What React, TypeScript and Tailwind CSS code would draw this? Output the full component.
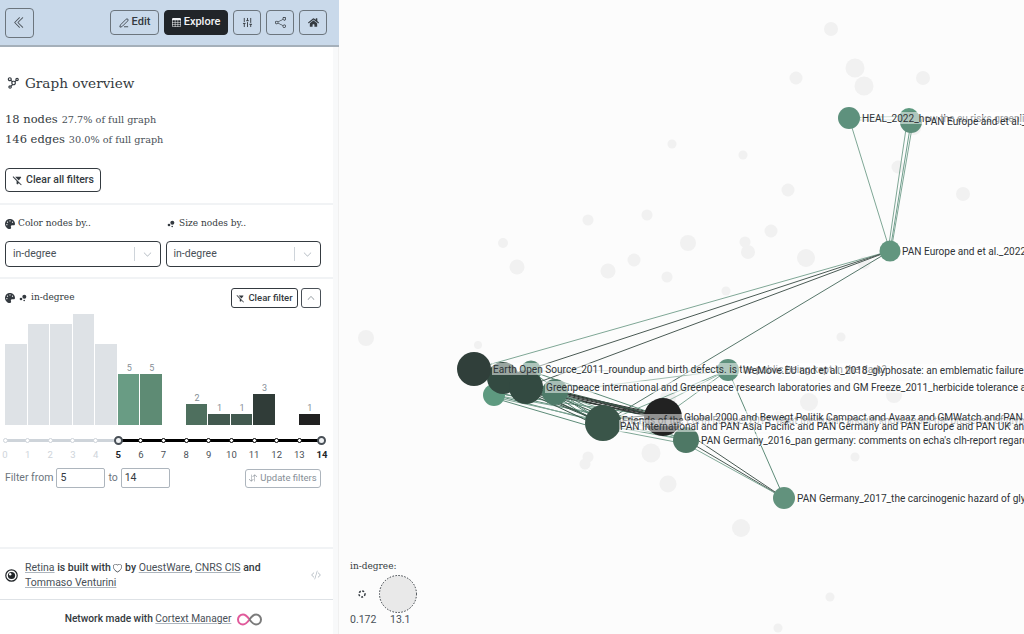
import React from 'react';
import { BsChevronDoubleLeft, BsShare, BsChevronDown, BsChevronUp, BsHeart, BsCodeSlash, BsArrowDownUp, BsTable } from 'react-icons/bs';
import { FaHome, FaPalette } from 'react-icons/fa';
import { BiNetworkChart } from 'react-icons/bi';
import { MdBubbleChart, MdFilterAltOff } from 'react-icons/md';
import { SlidersVertical, PenLine } from 'lucide-react';

const sans = "font-['Roboto','Liberation_Sans',sans-serif]";
const serif = "font-['DejaVu_Serif','Liberation_Serif',serif]";

const BARS: { h: number; color: string; label?: number }[] = [
  { h: 81, color: '#dee2e6' },
  { h: 101, color: '#dee2e6' },
  { h: 101, color: '#dee2e6' },
  { h: 111, color: '#dee2e6' },
  { h: 81, color: '#dee2e6' },
  { h: 51, color: '#699c84', label: 5 },
  { h: 51, color: '#5e8b74', label: 5 },
  { h: 0, color: 'transparent' },
  { h: 21, color: '#4e6f5e', label: 2 },
  { h: 11, color: '#42594f', label: 1 },
  { h: 11, color: '#42594f', label: 1 },
  { h: 31, color: '#303c38', label: 3 },
  { h: 0, color: 'transparent' },
  { h: 11, color: '#212121', label: 1 },
];

const TICKS = [0, 1, 2, 3, 4, 5, 6, 7, 8, 9, 10, 11, 12, 13, 14];

const GRAY_DOTS = [
  [672, 144, 4.5], [588, 220, 5.5], [647, 215, 5.5], [503, 243, 5], [517, 267, 7.5], [608, 271, 7.5],
  [634, 260, 6.5], [667, 277, 5.5], [688, 243, 8], [366, 338, 8], [831, 29, 7], [855, 68, 9.5],
  [864, 86, 9.5], [796, 78, 6.5], [923, 78, 7], [743, 155, 4.5], [788, 190, 6.5], [898, 167, 6.5],
  [963, 194, 7], [771, 231, 6.5], [745, 242, 5.5], [748, 252, 7], [806, 258, 9], [864, 263, 6.5],
  [726, 291, 4.5], [841, 337, 4.5], [914, 128, 7], [588, 457, 5.5], [585, 464, 5.5], [651, 453, 9.5],
  [668, 484, 8.5], [741, 528, 9], [855, 457, 4.5], [830, 597, 4.5], [778, 628, 4.5], [478, 345, 4],
  [668, 398, 8], [809, 402, 9], [894, 395, 8], [778, 418, 7],
];

const NODES = [
  [784, 498, 11, '#62927d'], [890, 251, 10.5, '#62967f'], [849, 118, 11, '#5e917d'], [909, 118, 10, '#5e9a80'],
  [911, 122, 11, '#5e8f7b'], [728, 370, 11, '#5e917d'], [531, 371, 10.5, '#5a8a77'], [555, 392, 13, '#4f7b69'],
  [494, 395, 11, '#5e9a80'], [503, 378, 16, '#334a41'], [474, 369, 17, '#303f3a'], [526, 387, 17, '#334a41'],
  [686, 440, 13, '#4e7865'], [603, 423, 18, '#3a5549'], [663, 417, 19, '#222222'],
] as const;

const EDGES: [number, number, number, number, string][] = [
  [474, 369, 890, 251, '#7fa796'], [503, 378, 890, 251, '#4a5a54'], [526, 387, 890, 251, '#4a5a54'], [603, 423, 890, 251, '#56766a'],
  [849, 118, 890, 251, '#7fa796'], [907, 122, 888, 251, '#7fa796'], [911, 122, 890, 251, '#6f9e8c'], [913, 122, 891, 251, '#7fa796'],
  [849, 118, 909, 116, '#9fc0b2'], [849, 120, 909, 120, '#bcd3c9'],
  [728, 370, 784, 498, '#5d8b78'], [686, 440, 784, 498, '#4a5a54'], [690, 435, 784, 498, '#4a5a54'], [686, 444, 784, 498, '#7fa796'],
  [555, 392, 728, 370, '#a5c0b4'], [531, 371, 728, 370, '#c4d6ce'], [603, 423, 728, 370, '#7fa796'], [663, 417, 728, 370, '#7fa796'], [640, 415, 728, 370, '#9fc0b2'],
  [494, 395, 603, 423, '#5d8b78'], [494, 392, 603, 416, '#5d8b78'], [494, 398, 603, 430, '#5d8b78'], [494, 395, 663, 425, '#7fa796'], [494, 397, 686, 440, '#7fa796'], [494, 393, 663, 417, '#5d8b78'],
  [503, 378, 603, 423, '#3a5549'], [503, 378, 663, 417, '#3a5549'], [526, 387, 663, 417, '#2b2b2b'], [526, 385, 663, 415, '#2b2b2b'], [526, 389, 663, 419, '#2b2b2b'], [526, 391, 663, 417, '#2b2b2b'],
  [526, 387, 603, 423, '#3a5549'], [526, 392, 603, 428, '#3a5549'], [526, 384, 603, 416, '#3a5549'], [555, 392, 603, 423, '#4f7b69'], [555, 395, 603, 428, '#4f7b69'], [555, 390, 603, 415, '#4f7b69'],
  [555, 392, 663, 417, '#33413b'], [555, 394, 663, 420, '#33413b'], [555, 392, 686, 440, '#7fa796'], [531, 371, 603, 423, '#5d8b78'], [531, 371, 663, 417, '#5d8b78'], [474, 369, 603, 423, '#3a5549'],
  [474, 369, 663, 417, '#3a5549'], [474, 369, 686, 440, '#7fa796'], [603, 423, 663, 417, '#2b2b2b'], [603, 425, 686, 440, '#7fa796'], [603, 428, 686, 444, '#7fa796'], [603, 420, 663, 414, '#33413b'],
];

const LABELS: [number, number, number, string][] = [
  [862, 118, 165, 'HEAL_2022_how the eu risks greenlighting'],
  [925, 121, 120, 'PAN Europe and et al._2022_toxic'],
  [902, 251, 125, 'PAN Europe and et al._2022_glyphosate'],
  [493, 369, 395, 'Earth Open Source_2011_roundup and birth defects. is the public being kept in the dark?'],
  [743, 370, 285, 'WeMove.EU and et al._2018_glyphosate: an emblematic failure'],
  [546, 387, 480, 'Greenpeace international and Greenpeace research laboratories and GM Freeze_2011_herbicide tolerance and'],
  [622, 420, 370, 'Friends of the Earth Europe_2013_what the public should know about the presence of glyphosate'],
  [684, 417, 342, 'Global 2000 and Bewegt Politik Campact and Avaaz and GMWatch and PAN Europe'],
  [620, 426, 406, 'PAN International and PAN Asia Pacific and PAN Germany and PAN Europe and PAN UK and'],
  [701, 440, 325, "PAN Germany_2016_pan germany: comments on echa's clh-report regarding"],
  [797, 498, 230, 'PAN Germany_2017_the carcinogenic hazard of glyphosate'],
];

function ToolButton({ children, dark, className }: { children: React.ReactNode; dark?: boolean; className: string }) {
  return (
    <button className={`h-[25px] flex items-center justify-center gap-[3px] rounded-[4px] border text-[11px] font-medium ${dark ? 'bg-[#212529] border-[#212529] text-[#f1f3f5]' : 'border-[#6c757d] text-[#343a40]'} ${className}`}>
      {children}
    </button>
  );
}

function Select() {
  return (
    <div className="flex-1 h-[26px] flex items-center rounded-[4px] border border-[#343a40] pl-[7px] text-[10.5px] text-[#495057]">
      <span className="flex-1">in-degree</span>
      <span className="w-px h-[14px] bg-[#ced4da]" />
      <span className="w-[25px] flex justify-center text-[#adb5bd]"><BsChevronDown size={9} /></span>
    </div>
  );
}

function GraphCanvas() {
  return (
    <svg className="absolute inset-0" width={1024} height={634} viewBox="0 0 1024 634">
      {GRAY_DOTS.map(([x, y, r], i) => <circle key={i} cx={x} cy={y} r={r} fill="#f1f1f1" />)}
      {EDGES.map(([x1, y1, x2, y2, c], i) => <line key={i} x1={x1} y1={y1} x2={x2} y2={y2} stroke={c} strokeWidth={1} />)}
      {NODES.map(([x, y, r, c], i) => <circle key={i} cx={x} cy={y} r={r} fill={c} />)}
      {LABELS.map(([x, y, w, text], i) => (
        <g key={i}>
          <rect x={x - 1} y={y - 6} width={w} height={12} fill="#ffffff" fillOpacity={0.5} />
          <text x={x} y={y + 3.5} fontSize={10.1} fontFamily="Roboto, sans-serif" fill="#2f3437">{text}</text>
        </g>
      ))}
    </svg>
  );
}

export default function App() {
  return (
    <div className={`relative w-[1024px] h-[634px] overflow-hidden bg-[#fcfcfc] ${sans}`}>
      <GraphCanvas />

      <div className="absolute left-0 top-0 h-[634px] w-[339px] flex flex-col">
        <div className="h-[47px] shrink-0 flex items-center pl-[5px] pr-[12px] bg-[#c9d9ea] border-b-2 border-[#a5b0ba]">
          <button className="w-[29px] h-[30px] flex items-center justify-center rounded-[4px] border border-[#6c757d] text-[#495057]">
            <BsChevronDoubleLeft size={13} />
          </button>
          <div className="ml-auto flex gap-[5px]">
            <ToolButton className="w-[49px]"><PenLine size={10} />Edit</ToolButton>
            <ToolButton dark className="w-[64px]"><BsTable size={9} />Explore</ToolButton>
            <ToolButton className="w-[28px]"><SlidersVertical size={11} /></ToolButton>
            <ToolButton className="w-[28px]"><BsShare size={11} /></ToolButton>
            <ToolButton className="w-[28px]"><FaHome size={11} /></ToolButton>
          </div>
        </div>

        <div className="flex-1 flex min-h-0 border-r border-[#f0f0f0]">
          <div className="w-[333px] flex flex-col bg-white text-[#343a40]">
            <div className="px-[5px] pt-[27px] h-[156px] shrink-0">
              <h1 className={`flex items-center gap-[5px] h-[18px] text-[13.6px] pl-px ${serif}`}>
                <BiNetworkChart size={14} />Graph overview
              </h1>
              <div className={`mt-[19px] flex items-baseline gap-[4px] text-[11.5px] h-[20px] ${serif}`}>
                <span>18 nodes</span><span className="text-[9.7px] text-[#495057]">27.7% of full graph</span>
              </div>
              <div className={`flex items-baseline gap-[4px] text-[11.5px] h-[20px] ${serif}`}>
                <span>146 edges</span><span className="text-[9.7px] text-[#495057]">30.0% of full graph</span>
              </div>
              <button className="mt-[17px] w-[96px] h-[24px] flex items-center justify-center gap-[3px] rounded-[4px] border border-[#343a40] text-[10.5px] font-medium">
                <MdFilterAltOff size={11} />Clear all filters
              </button>
            </div>

            <div className="h-[2px] shrink-0 bg-[#f1f3f5]" />

            <div className="h-[72px] shrink-0 pl-[5px] pr-[12px] pt-[12px]">
              <div className={`flex gap-[6px] text-[9px] h-[14px] items-center ${serif}`}>
                <div className="flex-1 flex items-center gap-[3px]"><FaPalette size={10} />Color nodes by..</div>
                <div className="flex-1 flex items-center gap-[3px]"><MdBubbleChart size={10} />Size nodes by..</div>
              </div>
              <div className="mt-[10px] flex gap-[5px]"><Select /><Select /></div>
            </div>

            <div className="h-[2px] shrink-0 bg-[#f1f3f5]" />

            <div className="flex-1 pl-[5px] pr-[11px]">
              <div className="h-[30px] mt-[9px] pr-px flex items-start">
                <div className={`flex items-center gap-[3px] h-[20px] text-[9px] ${serif}`}>
                  <FaPalette size={10} /><MdBubbleChart size={10} /><span>in-degree</span>
                </div>
                <button className="ml-auto w-[67px] h-[20px] flex items-center justify-center gap-[3px] rounded-[3px] border border-[#343a40] text-[9.5px] font-medium">
                  <MdFilterAltOff size={9} />Clear filter
                </button>
                <button className="ml-[3px] w-[20px] h-[20px] flex items-center justify-center rounded-[3px] border border-[#495057] text-[#6c757d]">
                  <BsChevronUp size={8} />
                </button>
              </div>

              <div className="h-[107px] pr-px flex items-end">
                {BARS.map((bar, i) => (
                  <div key={i} className="flex-1 flex flex-col items-center">
                    {bar.label !== undefined && <span className="text-[9px] leading-[11px] h-[11px] text-[#868e96]">{bar.label}</span>}
                    <div className="w-full border-r border-white" style={{ height: bar.h, backgroundColor: bar.color }} />
                  </div>
                ))}
              </div>

              <div className="relative h-[9px] mt-[11px] flex items-center justify-between">
                <div className="absolute left-0 top-[3px] h-[3px] w-[113px] bg-[#ced4da]" />
                <div className="absolute left-[113px] right-0 top-[3px] h-[3px] bg-black" />
                {TICKS.map((t) => {
                  const handle = t === 5 || t === 14;
                  return (
                    <span key={t} className="relative w-0 flex justify-center">
                      <span className={handle
                        ? 'shrink-0 w-[9px] h-[9px] rounded-full bg-[#f1f3f5] border-2 border-[#495057]'
                        : `shrink-0 w-[5px] h-[5px] rounded-full bg-white border ${t > 5 ? 'border-black' : 'border-[#ced4da]'}`} />
                    </span>
                  );
                })}
              </div>

              <div className="h-[12px] mt-[4px] flex justify-between text-[9.5px] leading-[12px]">
                {TICKS.map((t) => (
                  <span key={t} className="w-0 flex justify-center">
                    <span className={t < 5 ? 'text-[#ced4da]' : t === 5 || t === 14 ? 'font-bold text-[#212529]' : 'text-[#495057]'}>{t}</span>
                  </span>
                ))}
              </div>

              <div className="mt-[7px] pr-px h-[20px] flex items-center text-[10.5px] text-[#6c757d]">
                <span>Filter from</span>
                <span className="ml-[3px] w-[49px] h-[20px] pl-[3px] flex items-center border border-[#adb5bd] rounded-[2px] text-[#343a40] text-[10.5px]">5</span>
                <span className="mx-[3px]">to</span>
                <span className="w-[49px] h-[20px] pl-[3px] flex items-center border border-[#adb5bd] rounded-[2px] text-[#343a40] text-[10.5px]">14</span>
                <button className="ml-auto w-[76px] h-[19px] flex items-center justify-center gap-[3px] rounded-[3px] border border-[#adb5bd] text-[9.5px] text-[#868e96]">
                  <BsArrowDownUp size={8} />Update filters
                </button>
              </div>
            </div>

            <div className="h-[2px] shrink-0 bg-[#f1f3f5]" />

            <div className="h-[50px] shrink-0 flex items-center pl-[5px] pr-[12px] pt-[2px] text-[10.5px] leading-[15px] font-medium text-[#343a40]">
              <svg width={13} height={13} viewBox="0 0 13 13" className="shrink-0">
                <circle cx={6.5} cy={6.5} r={5.7} fill="none" stroke="#212529" strokeWidth={1.2} />
                <circle cx={6.5} cy={6.5} r={3.6} fill="#212529" />
                <circle cx={5.2} cy={5.2} r={1.2} fill="#ffffff" />
              </svg>
              <div className="ml-[7px] flex-1">
                <a className="font-normal underline decoration-[#adb5bd] text-[#495057]">Retina</a> is built with <BsHeart size={9} className="inline" /> by{' '}
                <a className="font-normal underline decoration-[#adb5bd] text-[#495057]">OuestWare</a>,{' '}
                <a className="font-normal underline decoration-[#adb5bd] text-[#495057]">CNRS CIS</a> and
                <br />
                <a className="font-normal underline decoration-[#adb5bd] text-[#495057]">Tommaso Venturini</a>
              </div>
              <BsCodeSlash size={10} className="text-[#adb5bd]" />
            </div>

            <div className="h-px shrink-0 bg-[#dee2e6]" />

            <div className="h-[34px] shrink-0 flex items-center justify-center pr-[6px] pt-[4px] text-[10.2px] text-[#343a40] font-medium">
              Network made with&nbsp;
              <a className="font-normal underline decoration-[#adb5bd] text-[#495057]">Cortext Manager</a>
              <svg width={25} height={13} viewBox="0 0 25 13" className="ml-[6px]">
                <path d="M12.5 6.5C10 3 8.5 1.5 6 1.5a5 5 0 0 0 0 10c2.5 0 4-1.5 6.5-5" fill="none" stroke="#e15a9b" strokeWidth={2} />
                <path d="M12.5 6.5C15 3 16.5 1.5 19 1.5a5 5 0 0 1 0 10c-2.5 0-4-1.5-6.5-5" fill="none" stroke="#7b7b7b" strokeWidth={2} />
              </svg>
            </div>
          </div>
          <div className="flex-1 bg-[#f8f9fa]" />
        </div>
      </div>

      <div className="absolute left-[350px] top-[559px] w-[70px] text-[#343a40]">
        <div className={`text-[9px] h-[14px] leading-[14px] ${serif}`}>in-degree:</div>
        <svg width={70} height={40} viewBox="0 0 70 40" className="mt-[1px] -mb-[1px]">
          <circle cx={12} cy={20} r={3} fill="none" stroke="#343a40" strokeWidth={1.5} strokeDasharray="2 1.5" />
          <circle cx={48} cy={20} r={18.5} fill="#e9e9e9" stroke="#343a40" strokeWidth={1} strokeDasharray="1.5 1.5" />
        </svg>
        <div className="flex text-[10.5px] leading-[14px] text-[#495057]">
          <span className="w-[40px]">0.172</span><span>13.1</span>
        </div>
      </div>
    </div>
  );
}
